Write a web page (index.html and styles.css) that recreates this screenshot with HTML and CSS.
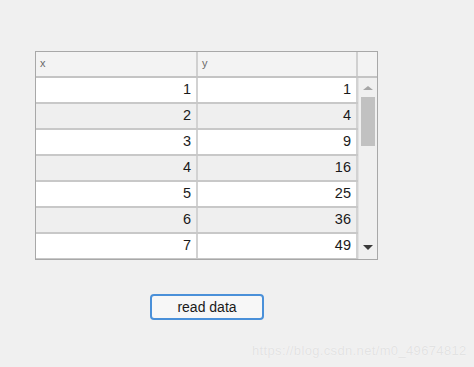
FILE: index.html
```html
<!DOCTYPE html>
<html lang="en">
<head>
    <meta charset="UTF-8">
    <title>uitable</title>
    <link rel="stylesheet" href="styles.css">
</head>
<body>
    <div class="figure">
        <div class="table">
            <div class="head">
                <div class="hcell col-x">x</div>
                <div class="hcell col-y">y</div>
                <div class="hcell corner"></div>
            </div>
            <div class="body">
                <div class="rows">
                    <div class="row"><div class="cell col-x">1</div><div class="cell col-y">1</div></div>
                    <div class="row alt"><div class="cell col-x">2</div><div class="cell col-y">4</div></div>
                    <div class="row"><div class="cell col-x">3</div><div class="cell col-y">9</div></div>
                    <div class="row alt"><div class="cell col-x">4</div><div class="cell col-y">16</div></div>
                    <div class="row"><div class="cell col-x">5</div><div class="cell col-y">25</div></div>
                    <div class="row alt"><div class="cell col-x">6</div><div class="cell col-y">36</div></div>
                    <div class="row"><div class="cell col-x">7</div><div class="cell col-y">49</div></div>
                    <div class="row alt"><div class="cell col-x"></div><div class="cell col-y"></div></div>
                </div>
                <div class="scrollbar">
                    <div class="arrow up"></div>
                    <div class="track"><div class="thumb"></div></div>
                    <div class="arrow down"></div>
                </div>
            </div>
        </div>
        <div class="actions">
            <button class="btn">read data</button>
        </div>
        <div class="watermark">https://blog.csdn.net/m0_49674812</div>
    </div>
</body>
</html>
```

FILE: styles.css
```css
body {
    margin: 0;
    padding: 0;
    background-color: #f0f0f0;
    font-family: "Liberation Sans", Arial, sans-serif;
    color: #1a1a1a;
}
.figure {
    width: 474px;
    height: 367px;
    padding: 51px 0 0 35px;
    box-sizing: border-box;
    position: relative;
}
.table {
    width: 343px;
    height: 209px;
    box-sizing: border-box;
    border: 1px solid #a8a8a8;
    background-color: #f0f0f0;
    display: flex;
    flex-direction: column;
    overflow: hidden;
}
.head {
    display: flex;
    height: 24px;
    flex-shrink: 0;
    border-bottom: 2px solid #c4c4c4;
    background-color: #f3f3f3;
}
.hcell {
    font-size: 11px;
    color: #6a6a6a;
    padding: 5px 0 0 4px;
    box-sizing: border-box;
    border-right: 2px solid #d0d0d0;
}
.col-x {
    width: 162px;
}
.col-y {
    width: 160px;
}
.corner {
    flex: 1;
    border-right: none;
}
.body {
    display: flex;
    flex: 1;
    overflow: hidden;
}
.rows {
    width: 322px;
    flex-shrink: 0;
}
.row {
    display: flex;
    height: 26px;
    background-color: #ffffff;
    border-bottom: 2px solid #c8c8c8;
    box-sizing: border-box;
}
.row.alt {
    background-color: #efefef;
}
.cell {
    font-size: 14.5px;
    text-align: right;
    padding: 3px 5px 0 0;
    box-sizing: border-box;
    border-right: 2px solid #d2d2d2;
}
.scrollbar {
    flex: 1;
    display: flex;
    flex-direction: column;
    align-items: center;
    background-color: #f0f0f0;
    border-left: 1px solid #e2e2e2;
}
.arrow {
    width: 0;
    height: 0;
    border-left: 5px solid transparent;
    border-right: 5px solid transparent;
}
.arrow.up {
    margin-top: 8px;
    border-bottom: 4px solid #a6a6a6;
}
.arrow.down {
    margin-bottom: 9px;
    border-top: 5px solid #3a3a3a;
}
.track {
    flex: 1;
    width: 100%;
    padding: 7px 2px 0 2px;
    box-sizing: border-box;
}
.thumb {
    height: 49px;
    background-color: #c1c1c1;
}
.actions {
    margin: 34px 0 0 115px;
}
.btn {
    width: 114px;
    height: 26px;
    font-family: "Liberation Sans", Arial, sans-serif;
    font-size: 14px;
    color: #1a1a1a;
    background-color: #f7f7f7;
    border: 2px solid #4a90d9;
    border-radius: 4px;
    padding: 0;
}
.watermark {
    position: absolute;
    left: 252px;
    top: 343px;
    font-size: 13px;
    color: #e2e2e2;
    text-shadow: 0 0 1px #ffffff;
    letter-spacing: 0.35px;
}
```
